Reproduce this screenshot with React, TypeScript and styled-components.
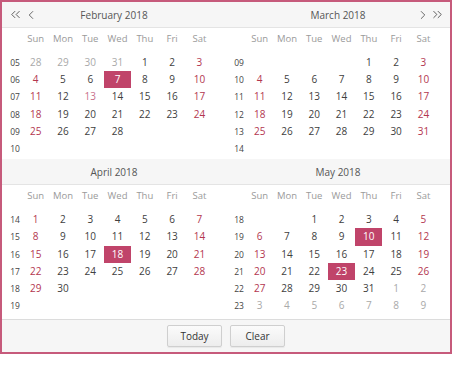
import React from 'react';
import styled, { createGlobalStyle } from 'styled-components';
import { ChevronLeft, ChevronRight, ChevronsLeft, ChevronsRight } from 'lucide-react';

const Global = createGlobalStyle`
  html, body { margin: 0; padding: 0; background: #fff; }
  body { font-family: "Open Sans", "Noto Sans", "Liberation Sans", sans-serif; }
`;

const Frame = styled.div`
  width: 452px;
  box-sizing: border-box;
  border: 2px solid #c65a7b;
  background: #fff;
`;

const Months = styled.div`
  display: grid;
  grid-template-columns: 1fr 1fr;
`;

const MonthBox = styled.section`
  padding-bottom: 2px;
`;

const Header = styled.div`
  height: 26px;
  box-sizing: border-box;
  background: #f6f6f6;
  border-bottom: 1px solid #e4e4e4;
  display: grid;
  grid-template-columns: 44px 1fr 44px;
  align-items: center;
`;

const Nav = styled.div<{ $side: 'left' | 'right' }>`
  display: flex;
  align-items: center;
  gap: ${(p) => (p.$side === 'left' ? '1.5px' : '0')};
  color: #555;
  justify-content: ${(p) => (p.$side === 'left' ? 'flex-start' : 'flex-end')};
  padding: ${(p) => (p.$side === 'left' ? '0 0 0 5.5px' : '0 5.5px 0 0')};
  svg { display: block; }
`;

const Title = styled.div`
  text-align: center;
  font-size: 10px;
  color: #555;
`;

const Grid = styled.div`
  display: grid;
  grid-template-columns: 14px repeat(7, 27.3px);
  grid-template-rows: 24px repeat(6, 17.2px);
  padding: 2px 0 0 6px;
`;

const DayName = styled.div`
  height: 17px;
  line-height: 17px;
  text-align: center;
  font-size: 9.5px;
  color: #9a9a9a;
`;

const WeekNo = styled.div`
  font-size: 8.5px;
  color: #444;
  line-height: 17.2px;
  text-align: center;
`;

type Kind = 'normal' | 'weekend' | 'other' | 'special' | 'blank';

const colors: Record<Kind, string> = {
  normal: '#404040',
  weekend: '#b3364f',
  other: '#a9a9a9',
  special: '#c8708a',
  blank: 'transparent',
};

const Day = styled.div<{ $kind: Kind; $sel?: boolean }>`
  font-size: 10px;
  line-height: 17.2px;
  text-align: center;
  color: ${(p) => (p.$sel ? '#fff' : colors[p.$kind])};
  background: ${(p) => (p.$sel ? '#c0446a' : 'transparent')};
`;

const Footer = styled.div`
  margin-top: 3px;
  height: 33px;
  box-sizing: border-box;
  border-top: 1px solid #dcdcdc;
  background: #f6f6f6;
  display: flex;
  justify-content: center;
  align-items: center;
  gap: 8px;
`;

const Button = styled.button`
  width: 55px;
  height: 22px;
  box-sizing: border-box;
  border: 1px solid #cfcfcf;
  border-radius: 2px;
  background: linear-gradient(#fbfbfb, #ededed);
  font-family: inherit;
  font-size: 10px;
  color: #333;
  padding: 0;
  box-shadow: 0 1px 1px rgba(0, 0, 0, 0.06);
`;

const DAY_NAMES = ['Sun', 'Mon', 'Tue', 'Wed', 'Thu', 'Fri', 'Sat'];
const MONTH_NAMES = ['January', 'February', 'March', 'April', 'May', 'June', 'July', 'August', 'September', 'October', 'November', 'December'];

interface MonthSpec {
  year: number;
  month: number; // 0-based
  firstWeek: number;
  leading: boolean;
  trailing: boolean;
  selected: number[];
  special: number[];
  nav?: 'left' | 'right';
}

interface Cell { label: string; kind: Kind; sel: boolean }

function buildWeeks(spec: MonthSpec): Cell[][] {
  const first = new Date(spec.year, spec.month, 1);
  const start = new Date(spec.year, spec.month, 1 - first.getDay());
  const weeks: Cell[][] = [];
  for (let w = 0; w < 6; w++) {
    const row: Cell[] = [];
    for (let d = 0; d < 7; d++) {
      const dt = new Date(start.getFullYear(), start.getMonth(), start.getDate() + w * 7 + d);
      const inMonth = dt.getMonth() === spec.month;
      const before = dt < first;
      const day = dt.getDate();
      if (!inMonth) {
        const show = before ? spec.leading : spec.trailing;
        row.push({ label: show ? String(day) : '', kind: show ? 'other' : 'blank', sel: false });
      } else {
        let kind: Kind = d === 0 || d === 6 ? 'weekend' : 'normal';
        if (spec.special.includes(day)) kind = 'special';
        row.push({ label: String(day), kind, sel: spec.selected.includes(day) });
      }
    }
    weeks.push(row);
  }
  return weeks;
}

const Month: React.FC<{ spec: MonthSpec }> = ({ spec }) => {
  const weeks = buildWeeks(spec);
  return (
    <MonthBox>
      <Header>
        <Nav $side="left">
          {spec.nav === 'left' && (
            <>
              <ChevronsLeft size={15} strokeWidth={1.5} />
              <ChevronLeft size={14} strokeWidth={1.5} />
            </>
          )}
        </Nav>
        <Title>
          {MONTH_NAMES[spec.month]} {spec.year}
        </Title>
        <Nav $side="right">
          {spec.nav === 'right' && (
            <>
              <ChevronRight size={14} strokeWidth={1.5} />
              <ChevronsRight size={15} strokeWidth={1.5} />
            </>
          )}
        </Nav>
      </Header>
      <Grid>
        <div />
        {DAY_NAMES.map((n) => (
          <DayName key={n}>{n}</DayName>
        ))}
        {weeks.map((row, i) => (
          <React.Fragment key={i}>
            <WeekNo>{String(spec.firstWeek + i).padStart(2, '0')}</WeekNo>
            {row.map((c, j) => (
              <Day key={j} $kind={c.kind} $sel={c.sel}>
                {c.label}
              </Day>
            ))}
          </React.Fragment>
        ))}
      </Grid>
    </MonthBox>
  );
};

const specs: MonthSpec[] = [
  { year: 2018, month: 1, firstWeek: 5, leading: true, trailing: false, selected: [7], special: [13], nav: 'left' },
  { year: 2018, month: 2, firstWeek: 9, leading: false, trailing: false, selected: [], special: [], nav: 'right' },
  { year: 2018, month: 3, firstWeek: 14, leading: false, trailing: false, selected: [18], special: [] },
  { year: 2018, month: 4, firstWeek: 18, leading: false, trailing: true, selected: [10, 23], special: [] },
];

export default function App() {
  return (
    <>
      <Global />
      <Frame>
        <Months>
          {specs.map((s) => (
            <Month key={s.month} spec={s} />
          ))}
        </Months>
        <Footer>
          <Button>Today</Button>
          <Button>Clear</Button>
        </Footer>
      </Frame>
    </>
  );
}
